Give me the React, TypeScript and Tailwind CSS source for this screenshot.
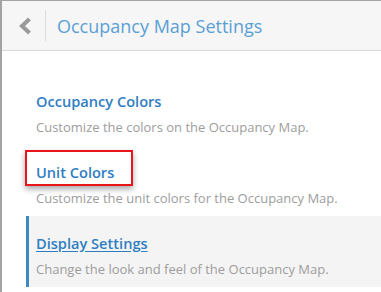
import React from "react";

function Item({
  title,
  desc,
  active,
  boxed,
}: {
  title: string;
  desc: string;
  active?: boolean;
  boxed?: boolean;
}) {
  return (
    <div
      className={
        "ml-[24px] border-l-[3px] pl-[7px] pt-[17px] pb-[10px] " +
        (active ? "border-[#3b8bc2] bg-[#f4f4f4]" : "border-transparent")
      }
    >
      <div className="relative h-[20px]">
        <a
          className={
            "block text-[14.6px] leading-[20px] font-semibold text-[#2f7dc1] " +
            (active ? "underline underline-offset-2" : "")
          }
        >
          {title}
        </a>
        {boxed && (
          <div className="absolute left-[-11px] top-[-12px] h-[36px] w-[108px] border-2 border-[#e8151b] shadow-[0_3px_6px_rgba(0,0,0,0.35)]" />
        )}
      </div>
      <div className="mt-[8px] text-[13px] leading-[16px] text-[#9d9d9d]">{desc}</div>
    </div>
  );
}

export default function App() {
  return (
    <div
      className="h-[292px] w-[381px] overflow-hidden border-t border-l-2 border-[#a3a3a3] bg-white"
      style={{ fontFamily: '"Open Sans", sans-serif' }}
    >
      <div className="flex h-[50px] items-center border-b border-[#d9d9d9] bg-[#f6f6f6]">
        <div className="flex w-[43px] items-center pl-[14px]">
          <svg width="18" height="18" viewBox="0 0 18 18">
            <path
              d="M13.5 2 L6 9 L13.5 16"
              fill="none"
              stroke="#9a9a9a"
              strokeWidth="4"
              strokeLinecap="butt"
              strokeLinejoin="miter"
            />
          </svg>
        </div>
        <div className="h-[31px] w-px bg-[#dcdcdc]" />
        <div className="pl-[11px] text-[18px] leading-[24px] text-[#5a9fd4]">
          Occupancy Map Settings
        </div>
      </div>
      <div className="pt-[23px]">
        <Item title="Occupancy Colors" desc="Customize the colors on the Occupancy Map." />
        <Item title="Unit Colors" desc="Customize the unit colors for the Occupancy Map." boxed />
        <Item title="Display Settings" desc="Change the look and feel of the Occupancy Map." active />
      </div>
    </div>
  );
}
